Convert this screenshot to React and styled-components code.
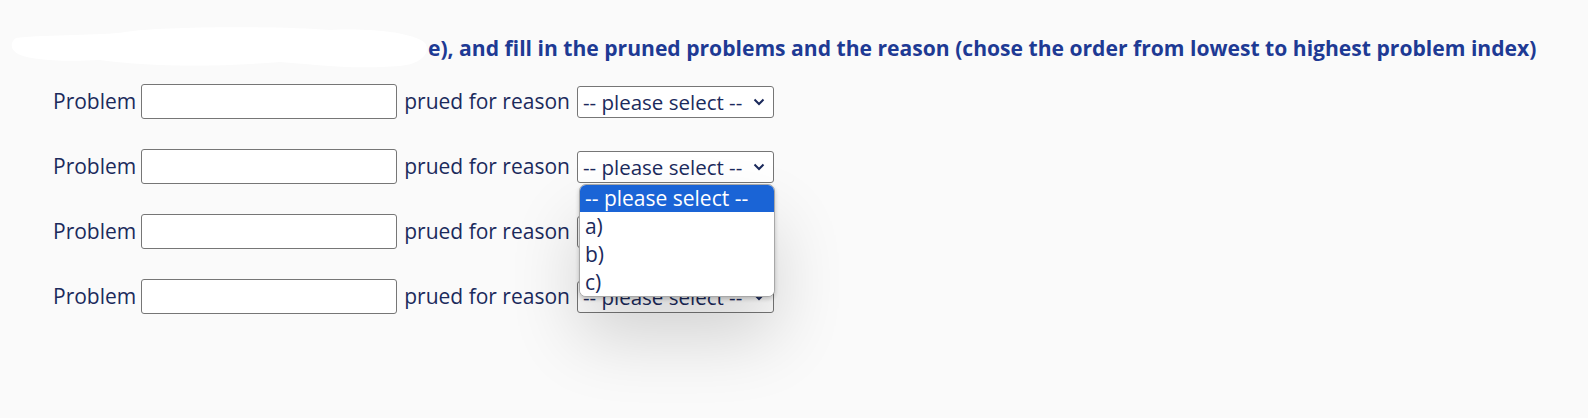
import styled, { createGlobalStyle } from 'styled-components';

const GlobalStyle = createGlobalStyle`
  html, body {
    margin: 0;
    background: #fafafa;
  }
  body {
    font-family: 'Open Sans', 'Noto Sans', sans-serif;
    color: #1b2a5c;
  }
`;

const Page = styled.div`
  width: 1588px;
  height: 418px;
  padding: 34px 0 0 53px;
  box-sizing: border-box;
  position: relative;
  overflow: hidden;
`;

const Heading = styled.h3`
  margin: 0 0 22px 375px;
  font-size: 21.1px;
  line-height: 28px;
  font-weight: 700;
  color: #1e3a94;
  white-space: nowrap;
  position: relative;
`;

const Blot = styled.svg`
  position: absolute;
  left: 10px;
  top: 24px;
`;

const Rows = styled.div`
  display: flex;
  flex-direction: column;
  gap: 30px;
`;

const Row = styled.div`
  display: flex;
  align-items: center;
  height: 35px;
  flex: 0 0 35px;
  font-size: 21px;
`;

const Label = styled.span`
  line-height: 35px;
  margin-right: ${p => p.$gap || 5}px;
`;

const TextBox = styled.input`
  width: 256px;
  height: 35px;
  box-sizing: border-box;
  border: 1px solid #767676;
  border-radius: 3px;
  background: #fff;
  margin: 0 7px 0 0;
  padding: 0;
`;

const SelectWrap = styled.div`
  position: relative;
`;

const Select = styled.div`
  width: 197px;
  height: 32px;
  box-sizing: border-box;
  border: 1px solid #767676;
  border-radius: 3px;
  background: #fff;
  display: flex;
  align-items: center;
  justify-content: space-between;
  padding: 0 8px 0 5px;
  font-size: 20.5px;
  color: #1b2a5c;
  white-space: nowrap;
`;

const Menu = styled.ul`
  position: absolute;
  z-index: 5;
  left: 2px;
  top: 33px;
  width: 194px;
  margin: 0;
  padding: 0;
  list-style: none;
  background: #fff;
  border: 1px solid #a8a8a8;
  border-radius: 7px;
  overflow: hidden;
  box-shadow: 0 2px 4px rgba(0, 0, 0, 0.2), 0 40px 70px rgba(0, 0, 0, 0.16);
  font-size: 21px;
`;

const Option = styled.li`
  height: ${p => (p.$active ? 27 : 28)}px;
  line-height: ${p => (p.$active ? 27 : 28)}px;
  padding: 0 5px;
  white-space: nowrap;
  background: ${p => (p.$active ? '#1a64d6' : '#fff')};
  color: ${p => (p.$active ? '#fff' : '#1b2a5c')};
`;

const Chevron = () => (
  <svg width="12" height="8" viewBox="0 0 12 8">
    <path d="M1.5 1.5 L6 6 L10.5 1.5" fill="none" stroke="#1b2a5c" strokeWidth="2" />
  </svg>
);

const ReasonSelect = ({ open }) => (
  <SelectWrap>
    <Select>
      <span>-- please select --</span>
      <Chevron />
    </Select>
    {open && (
      <Menu>
        <Option $active>-- please select --</Option>
        <Option>a)</Option>
        <Option>b)</Option>
        <Option>c)</Option>
      </Menu>
    )}
  </SelectWrap>
);

const rows = [0, 1, 2, 3];

const App = () => (
  <>
    <GlobalStyle />
    <Page>
      <Heading>e), and fill in the pruned problems and the reason (chose the order from lowest to highest problem index)</Heading>
      <Blot width="420" height="50" viewBox="0 0 420 50">
        <path
          d="M6 14 C40 10 90 12 115 8 C150 2 270 2 320 6 C360 4 400 8 414 18 C422 26 414 40 390 42 C340 46 300 40 270 38 C200 44 130 42 90 36 C50 38 20 36 8 30 C0 26 0 18 6 14 Z"
          fill="#ffffff"
        />
      </Blot>
      <Rows>
        {rows.map(i => (
          <Row key={i}>
            <Label>Problem</Label>
            <TextBox type="text" />
            <Label $gap={7}>prued for reason</Label>
            <ReasonSelect open={i === 1} />
          </Row>
        ))}
      </Rows>
    </Page>
  </>
);

export default App;
